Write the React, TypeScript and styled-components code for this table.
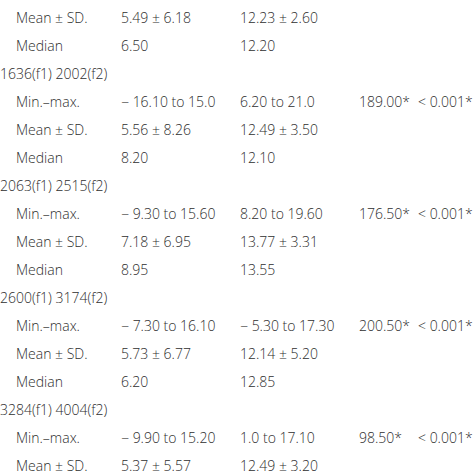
import React from 'react';
import styled, { createGlobalStyle } from 'styled-components';

const GlobalStyle = createGlobalStyle`
  html, body {
    margin: 0;
    padding: 0;
    background: #ffffff;
    overflow: hidden;
  }
`;

const Page = styled.div`
  width: 474px;
  height: 474px;
  overflow: hidden;
  background: #ffffff;
  padding-top: 3px;
  box-sizing: border-box;
  font-family: 'Open Sans', 'Noto Sans', sans-serif;
  font-size: 14px;
  font-weight: 300;
  color: #2e2e2e;
`;

const Row = styled.div`
  display: grid;
  grid-template-columns: 121px 119px 119px 59px 1fr;
  height: 28px;
  align-items: center;
  white-space: nowrap;
`;

const Label = styled.div<{ $group?: boolean }>`
  padding-left: ${(p) => (p.$group ? '0' : '16px')};
  grid-column: ${(p) => (p.$group ? '1 / -1' : 'auto')};
`;

const Cell = styled.div`
  overflow: visible;
`;

type Stat = { label: string; f1: string; f2: string; u?: string; p?: string };
type Group = { title?: string; rows: Stat[] };

const groups: Group[] = [
  {
    rows: [
      { label: 'Mean ± SD.', f1: '5.49 ± 6.18', f2: '12.23 ± 2.60' },
      { label: 'Median', f1: '6.50', f2: '12.20' },
    ],
  },
  {
    title: '1636(f1) 2002(f2)',
    rows: [
      { label: 'Min.–max.', f1: '− 16.10 to 15.0', f2: '6.20 to 21.0', u: '189.00*', p: '< 0.001*' },
      { label: 'Mean ± SD.', f1: '5.56 ± 8.26', f2: '12.49 ± 3.50' },
      { label: 'Median', f1: '8.20', f2: '12.10' },
    ],
  },
  {
    title: '2063(f1) 2515(f2)',
    rows: [
      { label: 'Min.–max.', f1: '− 9.30 to 15.60', f2: '8.20 to 19.60', u: '176.50*', p: '< 0.001*' },
      { label: 'Mean ± SD.', f1: '7.18 ± 6.95', f2: '13.77 ± 3.31' },
      { label: 'Median', f1: '8.95', f2: '13.55' },
    ],
  },
  {
    title: '2600(f1) 3174(f2)',
    rows: [
      { label: 'Min.–max.', f1: '− 7.30 to 16.10', f2: '− 5.30 to 17.30', u: '200.50*', p: '< 0.001*' },
      { label: 'Mean ± SD.', f1: '5.73 ± 6.77', f2: '12.14 ± 5.20' },
      { label: 'Median', f1: '6.20', f2: '12.85' },
    ],
  },
  {
    title: '3284(f1) 4004(f2)',
    rows: [
      { label: 'Min.–max.', f1: '− 9.90 to 15.20', f2: '1.0 to 17.10', u: '98.50*', p: '< 0.001*' },
      { label: 'Mean ± SD.', f1: '5.37 ± 5.57', f2: '12.49 ± 3.20' },
    ],
  },
];

const App = () => {
  return (
    <Page>
      <GlobalStyle />
      {groups.map((g, gi) => (
        <React.Fragment key={gi}>
          {g.title && (
            <Row>
              <Label $group>{g.title}</Label>
            </Row>
          )}
          {g.rows.map((r, ri) => (
            <Row key={ri}>
              <Label>{r.label}</Label>
              <Cell>{r.f1}</Cell>
              <Cell>{r.f2}</Cell>
              <Cell>{r.u}</Cell>
              <Cell>{r.p}</Cell>
            </Row>
          ))}
        </React.Fragment>
      ))}
    </Page>
  );
};

export default App;
